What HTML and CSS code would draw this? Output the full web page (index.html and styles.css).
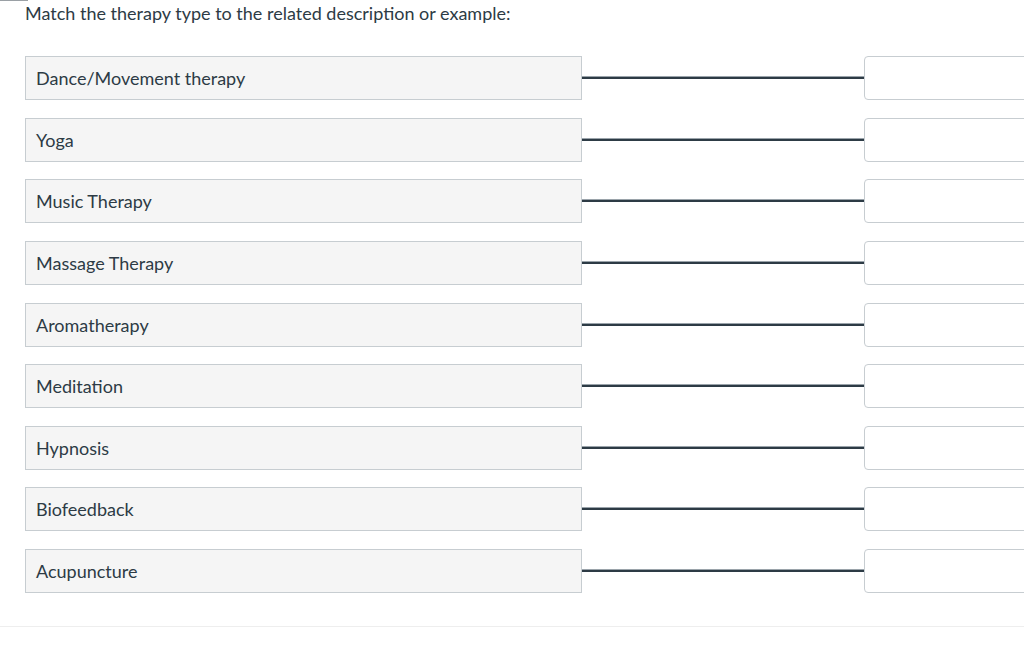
FILE: index.html
```html
<!DOCTYPE html>
<html>
<head>
<meta charset="utf-8">
<link rel="stylesheet" href="styles.css">
</head>
<body>
<div class="topmark"></div>
<div class="question">
  <p class="prompt">Match the therapy type to the related description or example:</p>
  <div class="rows">
    <div class="row"><div class="term">Dance/Movement therapy</div><div class="link"></div><div class="answer"></div></div>
    <div class="row"><div class="term">Yoga</div><div class="link"></div><div class="answer"></div></div>
    <div class="row"><div class="term">Music Therapy</div><div class="link"></div><div class="answer"></div></div>
    <div class="row"><div class="term">Massage Therapy</div><div class="link"></div><div class="answer"></div></div>
    <div class="row"><div class="term">Aromatherapy</div><div class="link"></div><div class="answer"></div></div>
    <div class="row"><div class="term">Meditation</div><div class="link"></div><div class="answer"></div></div>
    <div class="row"><div class="term">Hypnosis</div><div class="link"></div><div class="answer"></div></div>
    <div class="row"><div class="term">Biofeedback</div><div class="link"></div><div class="answer"></div></div>
    <div class="row"><div class="term">Acupuncture</div><div class="link"></div><div class="answer"></div></div>
  </div>
</div>
<div class="footer-rule"></div>
</body>
</html>
```
FILE: styles.css
```css
html, body {
  margin: 0;
  padding: 0;
  background: #ffffff;
  overflow: hidden;
}
body {
  font-family: Lato, "Open Sans", sans-serif;
  color: #2d3b45;
  width: 1024px;
  height: 651px;
  position: relative;
}
.topmark {
  position: absolute;
  left: 0;
  top: 0;
  width: 28px;
  height: 1px;
  background: #9aa0a5;
}
.question {
  padding-left: 25px;
}
.prompt {
  margin: 0;
  padding-top: 2px;
  font-size: 18px;
  line-height: 23px;
  height: 54px;
}
.rows {
  display: flex;
  flex-direction: column;
  gap: 17.625px;
}
.row {
  display: flex;
  align-items: center;
  height: 44px;
}
.term {
  box-sizing: border-box;
  width: 557px;
  height: 44px;
  flex: none;
  background: #f5f5f5;
  border: 1px solid #c7cdd1;
  padding-left: 10px;
  display: flex;
  align-items: center;
  font-size: 18px;
}
.link {
  width: 282px;
  flex: none;
  height: 2px;
  background: #2d3b45;
  margin-top: 0;
  box-shadow: 0 -1px 0 #9aa3aa;
}
.answer {
  box-sizing: border-box;
  flex: none;
  width: 200px;
  height: 44px;
  border: 1px solid #c7cdd1;
  border-radius: 4px;
  background: #fff;
}
.footer-rule {
  position: absolute;
  left: 0;
  right: 0;
  top: 626px;
  height: 1px;
  background: #eeeeee;
}
```
